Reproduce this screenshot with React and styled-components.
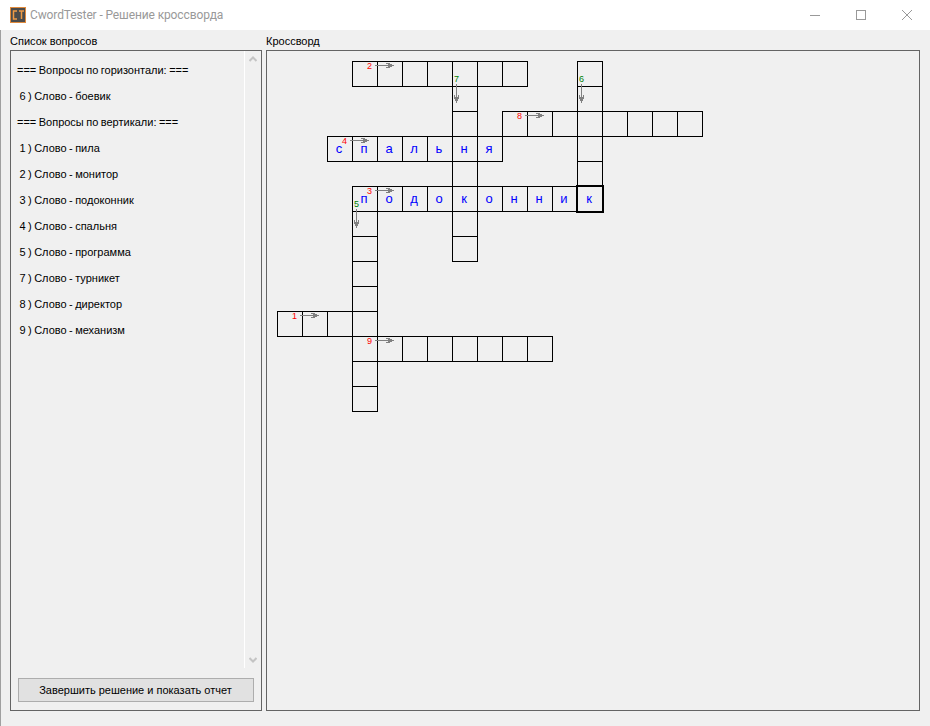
import React from "react";
import styled, { createGlobalStyle } from "styled-components";

const GlobalStyle = createGlobalStyle`
  html, body {
    margin: 0;
    padding: 0;
    background: #f0f0f0;
  }
`;

const Window = styled.div`
  width: 930px;
  height: 726px;
  display: flex;
  flex-direction: column;
  overflow: hidden;
  background: #f0f0f0;
  font-family: "Liberation Sans", Arial, sans-serif;
  font-size: 11px;
  color: #000;
`;

const TitleBar = styled.div`
  height: 30px;
  flex: none;
  display: flex;
  align-items: center;
  background: #fff;
  padding-left: 10px;
`;

const AppIcon = styled.svg`
  width: 16px;
  height: 16px;
  flex: none;
  margin-right: 4px;
`;

const TitleText = styled.div`
  flex: 1;
  font-family: Roboto, "Open Sans", sans-serif;
  font-size: 12px;
  letter-spacing: -0.12px;
  color: #999;
`;

const WinButton = styled.div`
  width: 46px;
  height: 30px;
  display: flex;
  align-items: center;
  justify-content: center;
`;

const Body = styled.div`
  flex: 1;
  display: flex;
  gap: 4px;
  padding: 4px 10px 15px 9px;
  border-left: 1px solid #a0a0a0;
  min-height: 0;
`;

const Column = styled.div`
  width: ${p => p.$width}px;
  flex: none;
  display: flex;
  flex-direction: column;
`;

const GroupLabel = styled.div`
  height: 16px;
  line-height: 14px;
  flex: none;
`;

const Panel = styled.div`
  flex: 1;
  min-height: 0;
  display: flex;
  flex-direction: column;
  border: 1px solid #646464;
`;

const ListArea = styled.div`
  flex: 1;
  min-height: 0;
  display: flex;
`;

const QuestionList = styled.div`
  flex: 1;
  padding: 6px 0 0 6px;
`;

const Question = styled.div`
  height: 26px;
  line-height: 26px;
  white-space: pre;
  word-spacing: -0.6px;
`;

const Scrollbar = styled.div`
  width: 16px;
  flex: none;
  border-left: 1px solid #fff;
  display: flex;
  flex-direction: column;
  align-items: center;
  justify-content: space-between;
  padding: 5px 0;
`;

const ButtonRow = styled.div`
  flex: none;
  padding: 10px 7px 8px;
`;

const FinishButton = styled.button`
  display: block;
  width: 100%;
  height: 24px;
  padding: 0 1px 0 0;
  box-sizing: border-box;
  background: #e1e1e1;
  border: 1px solid #adadad;
  font: inherit;
  color: #000;
`;

const Board = styled.div`
  display: grid;
  grid-template-columns: repeat(17, 25px);
  grid-auto-rows: 25px;
  padding: 10px;
`;

const Cell = styled.div`
  grid-column: ${p => p.$col + 1};
  grid-row: ${p => p.$row + 1};
  width: 26px;
  height: 26px;
  box-sizing: border-box;
  border: 1px solid #000;
  padding: 0 2px 1px 0;
  position: relative;
  display: flex;
  align-items: center;
  justify-content: center;
  font-size: 13px;
  color: #0000ff;
  box-shadow: ${p => (p.$active ? "0 0 0 1px #000" : "none")};
  z-index: ${p => (p.$active ? 1 : "auto")};
`;

const NumberMark = styled.span`
  position: absolute;
  left: ${p => (p.$down ? 1 : 14)}px;
  top: ${p => (p.$down ? 14 : 1)}px;
  font-size: 9px;
  line-height: 7px;
  color: ${p => (p.$down ? "#008000" : "#ff0000")};
  z-index: 2;
`;

const Arrow = styled.svg`
  position: absolute;
  left: ${p => (p.$down ? 0 : 22)}px;
  top: ${p => (p.$down ? 22 : 0)}px;
  z-index: 2;
`;

const words = [
  { n: 1, col: 0, row: 10, len: 4 },
  { n: 2, col: 3, row: 0, len: 7 },
  { n: 3, col: 3, row: 5, len: 10, text: "подоконник" },
  { n: 4, col: 2, row: 3, len: 7, text: "спальня" },
  { n: 5, col: 3, row: 5, len: 9, down: true },
  { n: 6, col: 12, row: 0, len: 6, down: true },
  { n: 7, col: 7, row: 0, len: 8, down: true },
  { n: 8, col: 9, row: 2, len: 8 },
  { n: 9, col: 3, row: 11, len: 8 }
];

const questions = [
  "=== Вопросы по горизонтали: ===",
  " 6 ) Слово - боевик",
  "=== Вопросы по вертикали: ===",
  " 1 ) Слово - пила",
  " 2 ) Слово - монитор",
  " 3 ) Слово - подоконник",
  " 4 ) Слово - спальня",
  " 5 ) Слово - программа",
  " 7 ) Слово - турникет",
  " 8 ) Слово - директор",
  " 9 ) Слово - механизм"
];

// merge the words into one map of cells, crossings share a cell
const buildCells = () => {
  const map = new Map();
  const getCell = (col, row) => {
    const key = `${col}:${row}`;
    if (!map.has(key)) map.set(key, { col, row, letter: "", marks: [] });
    return map.get(key);
  };
  words.forEach(w => {
    for (let i = 0; i < w.len; i++) {
      const cell = w.down ? getCell(w.col, w.row + i) : getCell(w.col + i, w.row);
      if (w.text) cell.letter = w.text[i];
      if (i === 0) cell.marks.push(w);
    }
  });
  return [...map.values()];
};

function ArrowMark({ down }) {
  const shape = (
    <g fill="#808080">
      <rect x="0" y="3" width="19" height="1" />
      <rect x="13" y="2" width="4" height="3" />
      <rect x="11" y="1" width="4" height="1" />
      <rect x="11" y="5" width="4" height="1" />
    </g>
  );
  if (down) {
    return (
      <Arrow $down width={7} height={19} viewBox="0 0 7 19">
        <g transform="translate(7 0) rotate(90)">{shape}</g>
      </Arrow>
    );
  }
  return (
    <Arrow width={19} height={7} viewBox="0 0 19 7">
      {shape}
    </Arrow>
  );
}

function ChevronIcon({ up }) {
  return (
    <svg width="8" height="6" viewBox="0 0 8 6">
      <path
        d={up ? "M0.5 5L4 1.5L7.5 5" : "M0.5 1L4 4.5L7.5 1"}
        fill="none"
        stroke="#c4c4c4"
        strokeWidth="2"
      />
    </svg>
  );
}

export default function App() {
  const cells = buildCells();

  return (
    <Window>
      <GlobalStyle />
      <TitleBar>
        <AppIcon viewBox="0 0 16 16">
          <rect x="0.5" y="0.5" width="15" height="15" fill="#4b4b4b" stroke="#e08a3c" />
          <path d="M7 4H3.5V12H7M9 4H14M11.5 4V12" fill="none" stroke="#ef9a45" strokeWidth="1.5" />
        </AppIcon>
        <TitleText>CwordTester - Решение кроссворда</TitleText>
        <WinButton>
          <svg width="10" height="1" viewBox="0 0 10 1">
            <rect width="10" height="1" fill="#999" />
          </svg>
        </WinButton>
        <WinButton>
          <svg width="10" height="10" viewBox="0 0 10 10">
            <rect x="0.5" y="0.5" width="9" height="9" fill="none" stroke="#999" />
          </svg>
        </WinButton>
        <WinButton>
          <svg width="10" height="10" viewBox="0 0 10 10">
            <path d="M0 0L10 10M10 0L0 10" stroke="#999" strokeWidth="1" />
          </svg>
        </WinButton>
      </TitleBar>
      <Body>
        <Column $width={252}>
          <GroupLabel>Список вопросов</GroupLabel>
          <Panel>
            <ListArea>
              <QuestionList>
                {questions.map(q => (
                  <Question key={q}>{q}</Question>
                ))}
              </QuestionList>
              <Scrollbar>
                <ChevronIcon up />
                <ChevronIcon />
              </Scrollbar>
            </ListArea>
            <ButtonRow>
              <FinishButton>Завершить решение и показать отчет</FinishButton>
            </ButtonRow>
          </Panel>
        </Column>
        <Column $width={654}>
          <GroupLabel>Кроссворд</GroupLabel>
          <Panel>
            <Board>
              {cells.map(c => (
                <Cell key={`${c.col}:${c.row}`} $col={c.col} $row={c.row} $active={c.col === 12 && c.row === 5}>
                  {c.letter}
                  {c.marks.map(m => (
                    <React.Fragment key={m.n}>
                      <NumberMark $down={m.down}>{m.n}</NumberMark>
                      <ArrowMark down={m.down} />
                    </React.Fragment>
                  ))}
                </Cell>
              ))}
            </Board>
          </Panel>
        </Column>
      </Body>
    </Window>
  );
}
